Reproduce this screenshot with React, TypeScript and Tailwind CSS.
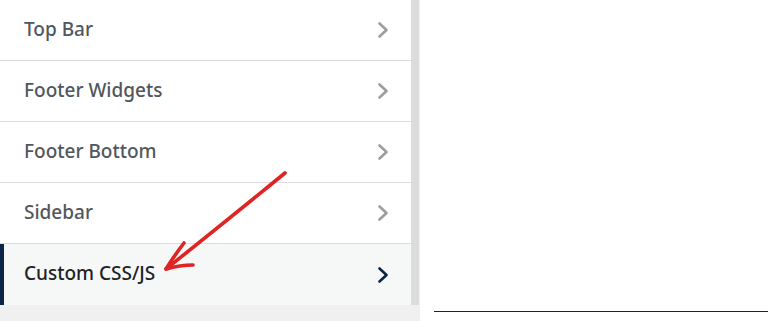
import React from "react";

const items = [
  { label: "Top Bar", active: false },
  { label: "Footer Widgets", active: false },
  { label: "Footer Bottom", active: false },
  { label: "Sidebar", active: false },
  { label: "Custom CSS/JS", active: true },
];

const Chevron = ({ active }: { active: boolean }) => (
  <svg width="12" height="18" viewBox="0 0 12 18" fill="none">
    <path
      d="M2.5 2.5L9.5 9L2.5 15.5"
      stroke={active ? "#0b2447" : "#9a9da1"}
      strokeWidth="2.6"
      strokeLinecap="round"
      strokeLinejoin="round"
    />
  </svg>
);

export default function App() {
  return (
    <div
      className="relative flex h-[321px] w-[768px] overflow-hidden bg-white"
      style={{ fontFamily: '"Noto Sans", "Open Sans", sans-serif' }}
    >
      <div className="flex w-[420px] flex-col bg-[#f0f0f1]">
        <div className="flex">
          <ul className="w-[411px] bg-white">
            {items.map((item) => (
              <li
                key={item.label}
                className={
                  item.active
                    ? "flex h-[61px] items-center justify-between border-l-4 border-[#0b2447] bg-[#f6f7f7] pl-[20px] pr-[22px]"
                    : "flex h-[61px] items-center justify-between border-b border-[#dcdcde] pl-[24px] pr-[22px]"
                }
              >
                <span
                  className={
                    item.active
                      ? "-mt-[2px] text-[19px] font-medium text-[#1d2327]"
                      : "-mt-[2px] text-[19px] font-medium text-[#50575e]"
                  }
                >
                  {item.label}
                </span>
                <Chevron active={item.active} />
              </li>
            ))}
          </ul>
          <div className="w-[8px] bg-[#dcdcde]" />
        </div>
      </div>
      <div className="flex flex-1 flex-col justify-end pb-[9px] pl-[14px]">
        <div className="h-px bg-[#222]" />
      </div>
      <svg
        className="pointer-events-none absolute left-0 top-0"
        width="768"
        height="321"
        viewBox="0 0 768 321"
        fill="none"
      >
        <path
          d="M285 173 Q225 222 166 269"
          stroke="#e02424"
          strokeWidth="3.6"
          strokeLinecap="round"
        />
        <path
          d="M184 243 Q174 256 166 269 Q180 265 193 265"
          stroke="#e02424"
          strokeWidth="3.6"
          strokeLinecap="round"
          strokeLinejoin="round"
        />
      </svg>
    </div>
  );
}
